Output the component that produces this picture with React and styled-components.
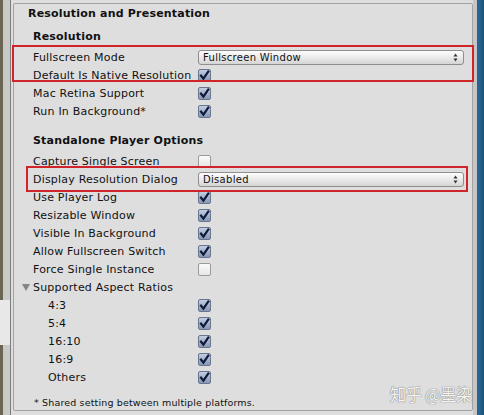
import styled, { createGlobalStyle } from 'styled-components'

const GlobalStyle = createGlobalStyle`
  html, body {
    margin: 0;
    padding: 0;
    background: #dedede;
  }
  body {
    font-family: "DejaVu Sans", Verdana, sans-serif;
    color: #111;
  }
`

const resolutionRows = [
  { label: 'Fullscreen Mode', dropdown: 'Fullscreen Window' },
  { label: 'Default Is Native Resolution', checked: true },
  { label: 'Mac Retina Support', checked: true },
  { label: 'Run In Background*', checked: true }
]

const aspectRatios = ['4:3', '5:4', '16:10', '16:9', 'Others']

function CheckMark() {
  return (
    <svg width="11" height="11" viewBox="0 0 11 11">
      <path d="M2 5.6 L4.4 8.6 L9.3 1.6" fill="none" stroke="#0f1a3a" strokeWidth="2.2" strokeLinecap="square" strokeLinejoin="miter" />
    </svg>
  )
}

function Arrows() {
  return (
    <svg width="5" height="9" viewBox="0 0 5 9">
      <path d="M2.5 0.5 L4.5 3.5 L0.5 3.5 Z" fill="#333" />
      <path d="M2.5 8.5 L4.5 5.5 L0.5 5.5 Z" fill="#333" />
    </svg>
  )
}

function Toggle({ checked }) {
  return <CheckBox $checked={checked}>{checked ? <CheckMark /> : null}</CheckBox>
}

function SettingRow({ label, checked, dropdown, indent = 19 }) {
  return (
    <Row>
      <Label $indent={indent}>{label}</Label>
      {dropdown ? (
        <Dropdown>
          <span>{dropdown}</span>
          <Arrows />
        </Dropdown>
      ) : (
        <Toggle checked={checked} />
      )}
    </Row>
  )
}

export default function App() {
  return (
    <Page>
      <GlobalStyle />
      <LeftEdge />
      <Inspector>
        <Box>
          <Title>Resolution and Presentation</Title>
          <Heading>Resolution</Heading>
          <Highlight $top={-3} $right={-10} $bottom={2} $left={-2}>
            {resolutionRows.slice(0, 2).map((row) => <SettingRow key={row.label} {...row} />)}
          </Highlight>
          {resolutionRows.slice(2).map((row) => <SettingRow key={row.label} {...row} />)}

          <Heading $gap={12}>Standalone Player Options</Heading>
          <SettingRow label="Capture Single Screen" checked={false} />
          <Highlight $top={-4} $right={-4} $bottom={-4} $left={12}>
            <SettingRow label="Display Resolution Dialog" dropdown="Disabled" />
          </Highlight>
          <SettingRow label="Use Player Log" checked />
          <SettingRow label="Resizable Window" checked />
          <SettingRow label="Visible In Background" checked />
          <SettingRow label="Allow Fullscreen Switch" checked />
          <SettingRow label="Force Single Instance" checked={false} />
          <Row>
            <Foldout>
              <Triangle />
              <span>Supported Aspect Ratios</span>
            </Foldout>
          </Row>
          {aspectRatios.map((ratio) => (
            <SettingRow key={ratio} label={ratio} checked indent={34} />
          ))}
          <FootNote>* Shared setting between multiple platforms.</FootNote>
        </Box>
        <Watermark>知乎 @墨染</Watermark>
      </Inspector>
      <RightEdge />
    </Page>
  )
}

const Page = styled.div`
  display: flex;
  width: 484px;
  height: 415px;
  overflow: hidden;
  background: #dedede;
`

const LeftEdge = styled.div`
  width: 11px;
  flex-shrink: 0;
  background:
    linear-gradient(to right, transparent 0 10px, #7c7c7c 10px 11px),
    linear-gradient(to bottom, transparent 0 300px, #e8e8e8 300px 345px, transparent 345px),
    linear-gradient(to right, #6a6552 0 3px, #c9c9c7 3px 10px);
`

const Inspector = styled.div`
  position: relative;
  flex: 1;
  padding: 3px 0 0 2px;
  background: #dedede;
`

const Box = styled.div`
  box-sizing: content-box;
  width: 450px;
  border: 1px solid #a2a2a2;
  border-radius: 2px;
  padding: 1px 8px 0 0;
`

const Title = styled.div`
  padding-left: 14px;
  line-height: 18px;
  font-size: 11px;
  font-weight: bold;
  letter-spacing: 0.2px;
`

const Heading = styled.div`
  margin-top: ${(props) => props.$gap || 5}px;
  margin-bottom: 2px;
  padding-left: 19px;
  line-height: 18px;
  font-size: 11px;
  font-weight: bold;
  letter-spacing: 0.2px;
`

const Row = styled.div`
  display: grid;
  grid-template-columns: 184px 1fr;
  align-items: center;
  height: 18px;
`

const Label = styled.span`
  padding-left: ${(props) => props.$indent}px;
  font-size: 11px;
  letter-spacing: 0.2px;
  white-space: nowrap;
`

const CheckBox = styled.span`
  display: flex;
  align-items: center;
  justify-content: center;
  width: 11px;
  height: 11px;
  border-radius: 2px;
  border: 1px solid ${(props) => (props.$checked ? '#6a7690' : '#9a9a9a')};
  background: ${(props) => (props.$checked
    ? 'linear-gradient(to bottom, #c3cde0, #8797b5)'
    : 'linear-gradient(to bottom, #fbfbfb, #e6e6e6)')};
`

const Dropdown = styled.div`
  display: flex;
  align-items: center;
  justify-content: space-between;
  height: 13px;
  padding: 0 5px 0 4px;
  border: 1px solid #8e8e8e;
  border-radius: 3px;
  background: linear-gradient(to bottom, #fdfdfd, #e2e2e2 70%, #d4d4d4);
  font-size: 10px;
  letter-spacing: 0.3px;
  white-space: nowrap;
`

const Highlight = styled.div`
  position: relative;

  &::after {
    content: '';
    position: absolute;
    top: ${(props) => props.$top}px;
    right: ${(props) => props.$right}px;
    bottom: ${(props) => props.$bottom}px;
    left: ${(props) => props.$left}px;
    border: 2px solid #d0242a;
    pointer-events: none;
  }
`

const Foldout = styled.div`
  display: flex;
  align-items: center;
  gap: 3px;
  padding-left: 8px;
  font-size: 11px;
  letter-spacing: 0.2px;
  white-space: nowrap;
`

const Triangle = styled.span`
  width: 0;
  height: 0;
  border-left: 4px solid transparent;
  border-right: 4px solid transparent;
  border-top: 7px solid #858585;
`

const FootNote = styled.div`
  margin-top: 10px;
  padding-left: 20px;
  line-height: 14px;
  font-size: 9.5px;
  letter-spacing: 0.15px;
  white-space: nowrap;
`

const Watermark = styled.div`
  position: absolute;
  right: 1px;
  top: 382px;
  font-family: "Noto Sans CJK SC", sans-serif;
  font-size: 16.5px;
  letter-spacing: -0.5px;
  color: #f4f4f4;
  text-shadow: 0 0 1px #7a7a7a, 0 0 1px #7a7a7a;
  pointer-events: none;
`

const RightEdge = styled.div`
  width: 11px;
  flex-shrink: 0;
  background: linear-gradient(to right, #c6c6c6 0 4px, #555 4px 5px, #2a6a98 5px, #1b4f7a);
`
